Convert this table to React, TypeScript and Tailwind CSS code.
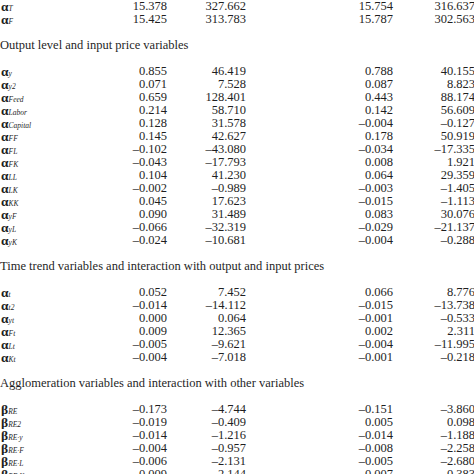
import React from 'react';

type Row = { sym: string; sub: string; v: [string, string, string, string] };
type Section = { title?: string; rows: Row[] };

const sections: Section[] = [
  {
    rows: [
      { sym: 'α', sub: 'T', v: ['15.378', '327.662', '15.754', '316.637'] },
      { sym: 'α', sub: 'F', v: ['15.425', '313.783', '15.787', '302.563'] },
    ],
  },
  {
    title: 'Output level and input price variables',
    rows: [
      { sym: 'α', sub: 'y', v: ['0.855', '46.419', '0.788', '40.155'] },
      { sym: 'α', sub: 'y2', v: ['0.071', '7.528', '0.087', '8.823'] },
      { sym: 'α', sub: 'Feed', v: ['0.659', '128.401', '0.443', '88.174'] },
      { sym: 'α', sub: 'Labor', v: ['0.214', '58.710', '0.142', '56.609'] },
      { sym: 'α', sub: 'Capital', v: ['0.128', '31.578', '–0.004', '–0.127'] },
      { sym: 'α', sub: 'FF', v: ['0.145', '42.627', '0.178', '50.919'] },
      { sym: 'α', sub: 'FL', v: ['–0.102', '–43.080', '–0.034', '–17.335'] },
      { sym: 'α', sub: 'FK', v: ['–0.043', '–17.793', '0.008', '1.921'] },
      { sym: 'α', sub: 'LL', v: ['0.104', '41.230', '0.064', '29.359'] },
      { sym: 'α', sub: 'LK', v: ['–0.002', '–0.989', '–0.003', '–1.405'] },
      { sym: 'α', sub: 'KK', v: ['0.045', '17.623', '–0.015', '–1.113'] },
      { sym: 'α', sub: 'yF', v: ['0.090', '31.489', '0.083', '30.076'] },
      { sym: 'α', sub: 'yL', v: ['–0.066', '–32.319', '–0.029', '–21.137'] },
      { sym: 'α', sub: 'yK', v: ['–0.024', '–10.681', '–0.004', '–0.288'] },
    ],
  },
  {
    title: 'Time trend variables and interaction with output and input prices',
    rows: [
      { sym: 'α', sub: 't', v: ['0.052', '7.452', '0.066', '8.776'] },
      { sym: 'α', sub: 't2', v: ['–0.014', '–14.112', '–0.015', '–13.738'] },
      { sym: 'α', sub: 'yt', v: ['0.000', '0.064', '–0.001', '–0.533'] },
      { sym: 'α', sub: 'Ft', v: ['0.009', '12.365', '0.002', '2.311'] },
      { sym: 'α', sub: 'Lt', v: ['–0.005', '–9.621', '–0.004', '–11.995'] },
      { sym: 'α', sub: 'Kt', v: ['–0.004', '–7.018', '–0.001', '–0.218'] },
    ],
  },
  {
    title: 'Agglomeration variables and interaction with other variables',
    rows: [
      { sym: 'β', sub: 'RE', v: ['–0.173', '–4.744', '–0.151', '–3.860'] },
      { sym: 'β', sub: 'RE2', v: ['–0.019', '–0.409', '0.005', '0.098'] },
      { sym: 'β', sub: 'RE·y', v: ['–0.014', '–1.216', '–0.014', '–1.188'] },
      { sym: 'β', sub: 'RE·F', v: ['–0.004', '–0.957', '–0.008', '–2.258'] },
      { sym: 'β', sub: 'RE·L', v: ['–0.006', '–2.131', '–0.005', '–2.680'] },
      { sym: 'β', sub: 'RE·K', v: ['0.009', '2.144', '0.007', '0.383'] },
    ],
  },
];

function DataRow({ row }: { row: Row }) {
  return (
    <div className="flex h-[13px] items-center overflow-hidden leading-[13px]">
      <div className="flex h-[13px] w-[100px] items-center pl-[1px]">
        <span className="text-[13.5px] leading-[13px] font-semibold">{row.sym}</span>
        <span className="mt-[4px] text-[7.5px] leading-[8px] italic">{row.sub}</span>
      </div>
      <div className="w-[67px] text-right">{row.v[0]}</div>
      <div className="w-[79px] text-right">{row.v[1]}</div>
      <div className="w-[147px] text-right">{row.v[2]}</div>
      <div className="w-[82px] text-right">{row.v[3]}</div>
    </div>
  );
}

export default function App() {
  return (
    <div className="h-[474px] w-[474px] overflow-hidden bg-white text-[12.5px] text-[#1f1f1f] font-['Liberation_Serif',serif]">
      <div className="w-[480px]">
        {sections.map((s, i) => (
          <div key={i}>
            {s.title && (
              <div className="my-[13px] h-[13px] whitespace-nowrap leading-[13px]">{s.title}</div>
            )}
            {s.rows.map((r, j) => (
              <DataRow key={j} row={r} />
            ))}
          </div>
        ))}
      </div>
    </div>
  );
}
